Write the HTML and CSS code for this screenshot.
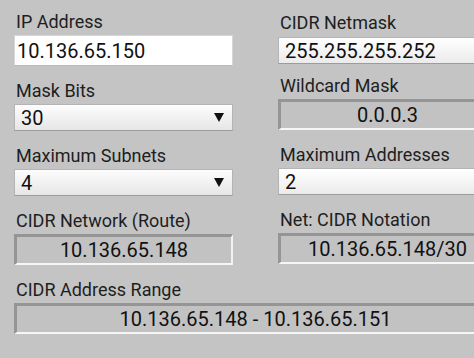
FILE: index.html
```html
<!DOCTYPE html>
<html lang="en">
<head>
<meta charset="utf-8">
<title>IP Subnet Calculator</title>
<link rel="stylesheet" href="styles.css">
</head>
<body>
<div class="form">
  <div class="cols">
    <div class="col">
      <div class="group">
        <div class="label">IP Address</div>
        <div class="field text">10.136.65.150</div>
      </div>
      <div class="group">
        <div class="label">Mask Bits</div>
        <div class="field select"><span>30</span><svg class="arrow" width="10" height="9" viewBox="0 0 10 9"><path d="M0 0H10L5 9Z" fill="#111"/></svg></div>
      </div>
      <div class="group">
        <div class="label">Maximum Subnets</div>
        <div class="field select"><span>4</span><svg class="arrow" width="10" height="9" viewBox="0 0 10 9"><path d="M0 0H10L5 9Z" fill="#111"/></svg></div>
      </div>
      <div class="group">
        <div class="label">CIDR Network (Route)</div>
        <div class="field output">10.136.65.148</div>
      </div>
    </div>
    <div class="col col-right">
      <div class="group group-first">
        <div class="label">CIDR Netmask</div>
        <div class="field soft">255.255.255.252</div>
      </div>
      <div class="group">
        <div class="label">Wildcard Mask</div>
        <div class="field output">0.0.0.3</div>
      </div>
      <div class="group">
        <div class="label">Maximum Addresses</div>
        <div class="field soft">2</div>
      </div>
      <div class="group">
        <div class="label">Net: CIDR Notation</div>
        <div class="field output">10.136.65.148/30</div>
      </div>
    </div>
  </div>
  <div class="group">
    <div class="label">CIDR Address Range</div>
    <div class="field output">10.136.65.148 - 10.136.65.151</div>
  </div>
</div>
</body>
</html>
```
FILE: styles.css
```css
html, body {
  margin: 0;
  padding: 0;
  overflow: hidden;
  background: #c4c4c4;
}
body {
  font-family: Roboto, "Liberation Sans", sans-serif;
  color: #161616;
}
.form {
  width: 482px;
  padding: 12px 0 0 14px;
}
.cols {
  display: flex;
  gap: 45px;
}
.col {
  width: 219px;
  display: flex;
  flex-direction: column;
}
.col-right {
  width: 218px;
  padding-top: 1px;
}
.group {
  display: flex;
  flex-direction: column;
  gap: 3px;
  margin-bottom: 15px;
}
.group-first {
  gap: 4px;
  margin-bottom: 12px;
}
.label {
  font-size: 18px;
  line-height: 20px;
  height: 20px;
  padding-left: 2px;
  white-space: nowrap;
  color: #1e1e1e;
}
.field {
  box-sizing: border-box;
  display: flex;
  align-items: center;
  font-size: 20px;
  white-space: nowrap;
  color: #111;
}
.text {
  height: 31px;
  background: #fff;
  border: 1px solid #d6d6d6;
  border-bottom-color: #b8b8b8;
  padding-left: 2px;
}
.select {
  height: 27px;
  background: linear-gradient(#fdfdfd, #e6e6e6);
  border: 1px solid #b4b4b4;
  border-bottom-color: #9c9c9c;
  padding: 0 8px 0 6px;
}
.arrow {
  margin-left: auto;
}
.soft {
  height: 27px;
  background: linear-gradient(#ffffff, #ebebeb);
  border: 1px solid #b4b4b4;
  border-bottom-color: #9c9c9c;
  padding-left: 6px;
}
.output {
  height: 31px;
  justify-content: center;
  background: #c2c2c2;
  border-style: solid;
  border-width: 3px 2px 2px 3px;
  border-color: #959595 #f2f2f2 #f6f6f6 #959595;
}
```
